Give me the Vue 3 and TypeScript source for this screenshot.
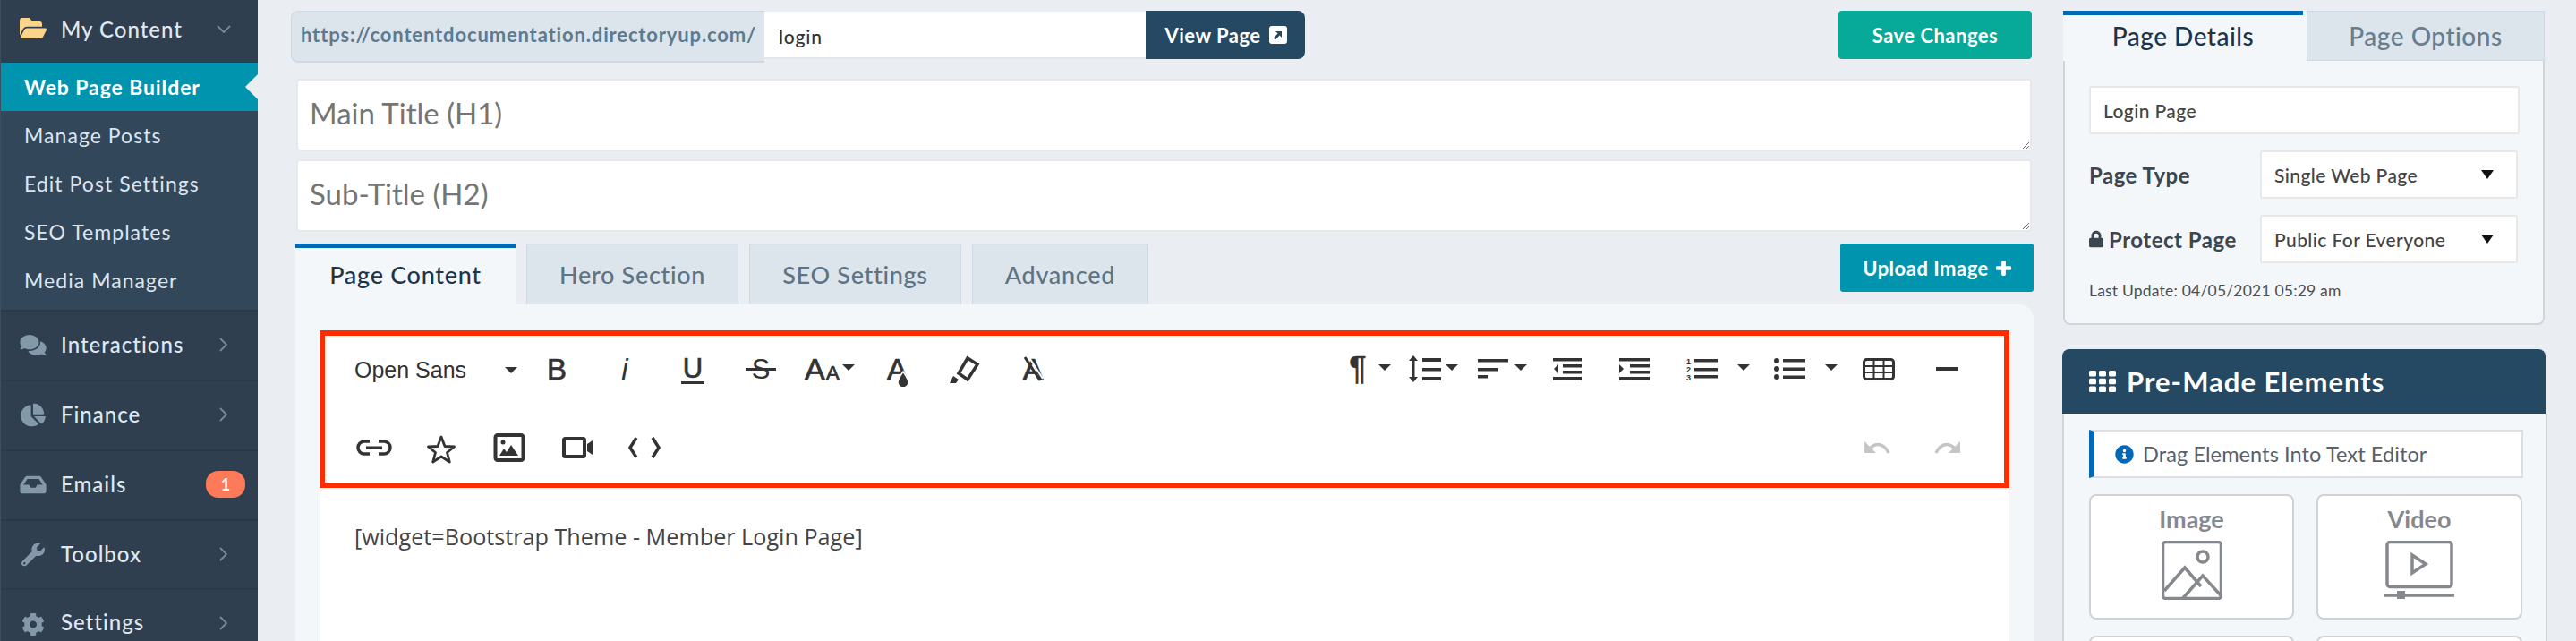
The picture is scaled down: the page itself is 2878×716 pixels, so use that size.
<script setup lang="ts">
interface NavItem {
  label: string
  viewBox: string
  path: string
  badge?: string
}

const subItems = ['Manage Posts', 'Edit Post Settings', 'SEO Templates', 'Media Manager']

const navItems: NavItem[] = [
  {
    label: 'Interactions',
    viewBox: '0 0 576 512',
    path: 'M416 192c0-88.4-93.1-160-208-160S0 103.6 0 192c0 34.3 14.1 65.9 38 92-13.4 30.2-35.5 54.2-35.8 54.5-2.2 2.3-2.8 5.7-1.5 8.7S4.8 352 8 352c36.6 0 66.9-12.3 88.7-25 32.2 15.7 70.3 25 111.3 25 114.9 0 208-71.6 208-160zm122 220c23.9-26 38-57.7 38-92 0-66.9-53.5-124.2-129.3-148.1.9 6.6 1.3 13.3 1.3 20.1 0 105.9-107.7 192-240 192-10.8 0-21.3-.8-31.7-1.9C207.8 439.6 281.8 480 368 480c41 0 79.1-9.2 111.3-25 21.8 12.7 52.1 25 88.7 25 3.2 0 6.1-1.9 7.3-4.8 1.3-2.9.7-6.3-1.5-8.7-.3-.3-22.4-24.2-35.8-54.5z'
  },
  {
    label: 'Finance',
    viewBox: '0 0 544 512',
    path: 'M527.79 288H290.5l158.03 158.03c6.04 6.04 15.98 6.53 22.19.68 38.7-36.46 65.32-85.61 73.13-140.86 1.34-9.46-6.51-17.85-16.06-17.85zm-15.83-64.8C503.72 103.74 408.26 8.28 288.8.04 279.68-.59 272 7.1 272 16.24V240h223.77c9.14 0 16.82-7.68 16.19-16.8zM224 288V50.71c0-9.55-8.39-17.4-17.84-16.06C86.99 51.49-4.1 155.6.14 280.37 4.5 408.51 114.83 513.59 243.03 511.98c50.4-.63 96.97-16.87 135.26-44.03 7.9-5.6 8.42-17.23 1.57-24.08L224 288z'
  },
  {
    label: 'Emails',
    viewBox: '0 0 576 512',
    badge: '1',
    path: 'M567.938 243.908L462.25 85.374A48.003 48.003 0 0 0 422.311 64H153.689a48 48 0 0 0-39.938 21.374L8.062 243.908A47.994 47.994 0 0 0 0 270.533V400c0 26.51 21.49 48 48 48h480c26.51 0 48-21.49 48-48V270.533a47.994 47.994 0 0 0-8.062-26.625zM162.252 128h251.497l85.333 128H376l-32 64H232l-32-64H76.918l85.334-128z'
  },
  {
    label: 'Toolbox',
    viewBox: '0 0 512 512',
    path: 'M507.73 109.1c-2.24-9.03-13.54-12.09-20.12-5.51l-74.36 74.36-67.88-11.31-11.31-67.88 74.36-74.36c6.62-6.62 3.43-17.9-5.66-20.16-47.38-11.74-99.55.91-136.58 37.93-39.64 39.64-50.55 97.1-34.05 147.2L18.74 402.76c-24.99 24.99-24.99 65.51 0 90.5 24.99 24.99 65.51 24.99 90.5 0l213.21-213.21c50.12 16.71 107.47 5.68 147.37-34.22 37.07-37.07 49.7-89.32 37.91-136.73zM64 472c-13.25 0-24-10.75-24-24 0-13.26 10.75-24 24-24s24 10.74 24 24c0 13.25-10.75 24-24 24z'
  },
  {
    label: 'Settings',
    viewBox: '0 0 512 512',
    path: 'M487.4 315.7l-42.6-24.6c4.3-23.2 4.3-47 0-70.2l42.6-24.6c4.9-2.8 7.1-8.6 5.5-14-11.1-35.6-30-67.8-54.7-94.6-3.8-4.1-10-5.1-14.8-2.3L380.8 110c-17.9-15.4-38.5-27.3-60.8-35.1V25.8c0-5.6-3.9-10.5-9.4-11.7-36.7-8.2-74.3-7.8-109.2 0-5.5 1.2-9.4 6.1-9.4 11.7V75c-22.2 7.9-42.8 19.8-60.8 35.1L88.7 85.5c-4.9-2.8-11-1.9-14.8 2.3-24.7 26.7-43.6 58.9-54.7 94.6-1.7 5.4.6 11.2 5.5 14L67.3 221c-4.3 23.2-4.3 47 0 70.2l-42.6 24.6c-4.9 2.8-7.1 8.6-5.5 14 11.1 35.6 30 67.8 54.7 94.6 3.8 4.1 10 5.1 14.8 2.3l42.6-24.6c17.9 15.4 38.5 27.3 60.8 35.1v49.2c0 5.6 3.9 10.5 9.4 11.7 36.7 8.2 74.3 7.8 109.2 0 5.5-1.2 9.4-6.1 9.4-11.7v-49.2c22.2-7.9 42.8-19.8 60.8-35.1l42.6 24.6c4.9 2.8 11 1.9 14.8-2.3 24.7-26.7 43.6-58.9 54.7-94.6 1.5-5.5-.7-11.3-5.6-14.1zM256 336c-44.1 0-80-35.9-80-80s35.9-80 80-80 80 35.9 80 80-35.9 80-80 80z'
  }
]

const tabs = ['Hero Section', 'SEO Settings', 'Advanced']
</script>

<template>
  <div class="page">
    <!-- left nav -->
    <aside class="sidebar">
      <div class="nav-head">
        <svg class="nav-icon folder" viewBox="0 64 576 384" preserveAspectRatio="none"><path d="M572.694 292.093L500.27 416.248A63.997 63.997 0 0 1 444.989 448H45.025c-18.523 0-30.064-20.093-20.731-36.093l72.424-124.155A64 64 0 0 1 152 256h399.964c18.523 0 30.064 20.093 20.73 36.093zM152 224h328v-48c0-26.51-21.49-48-48-48H272l-64-64H48C21.49 64 0 85.49 0 112v278.046l69.077-118.418C86.214 242.25 117.989 224 152 224z" /></svg>
        <span>My Content</span>
        <svg class="chev-down" viewBox="0 0 16 10"><path d="M1 1l7 7 7-7" /></svg>
      </div>
      <div class="sub-nav">
        <div class="sub-item active">Web Page Builder</div>
        <div v-for="item in subItems" :key="item" class="sub-item">{{ item }}</div>
      </div>
      <div v-for="item in navItems" :key="item.label" class="nav-row">
        <svg class="nav-icon" :viewBox="item.viewBox"><path :d="item.path" /></svg>
        <span>{{ item.label }}</span>
        <b v-if="item.badge" class="badge">{{ item.badge }}</b>
        <svg v-else class="chev-right" viewBox="0 0 10 16"><path d="M1 1l7 7-7 7" /></svg>
      </div>
    </aside>

    <main class="content">
      <section class="left-col">
        <div class="top-bar">
          <div class="url-group">
            <span class="url-addon">https://contentdocumentation.directoryup.com/</span>
            <input class="url-input" value="login" />
            <button class="view-btn">
              View Page
              <svg viewBox="0 0 20 20"><rect width="20" height="20" rx="3" fill="#fff" /><path d="M7 6h7v7l-2.4-2.4-4.6 5-2.2-2.2 4.8-4.8z" fill="#254863" /></svg>
            </button>
          </div>
          <button class="save-btn">Save Changes</button>
        </div>

        <textarea class="title-box" placeholder="Main Title (H1)"></textarea>
        <textarea class="title-box second" placeholder="Sub-Title (H2)"></textarea>

        <div class="tab-row">
          <div class="tab current">Page Content</div>
          <div v-for="tab in tabs" :key="tab" class="tab">{{ tab }}</div>
          <button class="upload-btn">
            Upload Image
            <svg viewBox="0 0 18 18"><path d="M6.5 1.5a1.5 1.5 0 0 1 1.5-1.5h2a1.5 1.5 0 0 1 1.5 1.5v5h5a1.5 1.5 0 0 1 1.5 1.5v2a1.5 1.5 0 0 1-1.5 1.5h-5v5a1.5 1.5 0 0 1-1.5 1.5h-2a1.5 1.5 0 0 1-1.5-1.5v-5h-5a1.5 1.5 0 0 1-1.5-1.5v-2a1.5 1.5 0 0 1 1.5-1.5h5z" fill="#fff" /></svg>
          </button>
        </div>

        <div class="tab-panel">
          <div class="editor">
            <div class="toolbar">
              <div class="tool-row">
                <div class="font-pick">
                  <span>Open Sans</span>
                  <svg width="14" height="7"><path d="M0 0h14l-7 7z" /></svg>
                </div>
                <svg class="btn glyph" viewBox="0 0 76 40"><text x="38" y="32" font-size="33" text-anchor="middle">B</text></svg>
                <svg class="btn" viewBox="0 0 76 40"><text x="38" y="32" font-size="33" font-style="italic" text-anchor="middle">i</text></svg>
                <svg class="btn glyph" viewBox="0 0 76 40"><text x="38" y="30" font-size="31" text-anchor="middle">U</text><rect x="25" y="34" width="26" height="3" /></svg>
                <svg class="btn" viewBox="0 0 76 40"><text x="38" y="31" font-size="31" text-anchor="middle">S</text><rect x="21" y="19" width="34" height="3" /></svg>
                <svg class="btn glyph" viewBox="0 0 76 40"><text x="11" y="32" font-size="34">A</text><text x="35" y="32" font-size="22">A</text><path d="M53 15h14l-7 7z" /></svg>
                <svg class="btn glyph" viewBox="0 0 76 40"><text x="27" y="32" font-size="34">A</text><path d="M45 23c4 6 6 9 6 12a6 6 0 0 1-12 0c0-3 2-6 6-12z" stroke="#fff" stroke-width="1.5" /></svg>
                <svg class="btn" viewBox="0 0 76 40"><path d="M41 8l11 7-11 17-10-7z" fill="none" stroke="#333" stroke-width="3.500" /><path d="M21 36l4-8 6 4-3 4z" /></svg>
                <svg class="btn glyph" viewBox="0 0 76 40"><text x="38" y="32" font-size="34" text-anchor="middle">A</text><path d="M29 7l17 26" stroke="#333" stroke-width="3" /><path d="M33 6l16 25" stroke="#fff" stroke-width="2" /></svg>

                <div class="spacer"></div>

                <svg class="btn glyph" width="65" viewBox="0 0 65 40"><text x="17" y="32" font-size="36" text-anchor="middle">¶</text><path d="M40 15h14l-7 7z" /></svg>
                <svg class="btn" width="75" viewBox="0 0 75 40"><path d="M14 5l5 6h-3.500v18h3.500l-5 6-5-6h3.500v-18h-3.500z" /><rect x="24" y="8" width="21" height="4" /><rect x="24" y="19" width="21" height="3.500" /><rect x="24" y="29" width="21" height="4" /><path d="M50 15h14l-7 7z" /></svg>
                <svg class="btn" width="73" viewBox="0 0 73 40"><rect x="11" y="9" width="34" height="3.500" /><rect x="11" y="19" width="23" height="3.500" /><rect x="11" y="27" width="12" height="3.500" /><path d="M52 15h14l-7 7z" /></svg>
                <svg class="btn" width="75" viewBox="0 0 75 40"><rect x="22" y="8" width="32" height="3.500" /><rect x="33" y="15" width="21" height="3.500" /><rect x="33" y="22" width="21" height="3.500" /><rect x="22" y="29" width="32" height="3.500" /><path d="M28 15v10l-5-5z" /></svg>
                <svg class="btn" viewBox="0 0 76 40"><rect x="21" y="8" width="34" height="3.500" /><rect x="33" y="15" width="22" height="3.500" /><rect x="33" y="22" width="22" height="3.500" /><rect x="21" y="29" width="34" height="3.500" /><path d="M21 15v10l5-5z" /></svg>
                <svg class="btn" width="97" viewBox="0 0 97 40"><text x="20" y="15" font-size="9" font-weight="700">1</text><text x="20" y="24" font-size="9" font-weight="700">2</text><text x="20" y="33" font-size="9" font-weight="700">3</text><rect x="29" y="9" width="26" height="3.500" /><rect x="29" y="19" width="26" height="3.500" /><rect x="29" y="27" width="26" height="3.500" /><path d="M77 15h14l-7 7z" /></svg>
                <svg class="btn" width="100" viewBox="0 0 100 40"><circle cx="24" cy="11" r="3" /><circle cx="24" cy="20" r="3" /><circle cx="24" cy="29" r="3" /><rect x="31" y="9" width="25" height="3.500" /><rect x="31" y="18.500" width="25" height="3.500" /><rect x="31" y="27.500" width="25" height="3.500" /><path d="M78 15h14l-7 7z" /></svg>
                <svg class="btn" viewBox="0 0 76 40"><rect x="21.500" y="9.500" width="33" height="22" rx="3" fill="none" stroke="#333" stroke-width="3" /><path d="M21 17h34M21 24h34M32.500 9v23M43.500 9v23" stroke="#333" stroke-width="2" /></svg>
                <svg class="btn" viewBox="0 0 76 40"><rect x="26" y="18" width="24" height="4" /></svg>
              </div>
              <div class="tool-row">
                <svg class="btn" viewBox="0 0 76 40"><path d="M34 13h-6a7 7 0 0 0 0 14h6M44 13h6a7 7 0 0 1 0 14h-6" fill="none" stroke="#333" stroke-width="3.500" /><rect x="30" y="18.500" width="18" height="3.500" /></svg>
                <svg class="btn" viewBox="0 0 76 40"><path d="M38 8l4 10.500 10.500.5-8 6.500 2.800 10.500-9.300-6-9.300 6 2.800-10.500-8-6.500 10.500-.5z" fill="none" stroke="#333" stroke-width="2.800" stroke-linejoin="round" /></svg>
                <svg class="btn" viewBox="0 0 76 40"><rect x="22.500" y="6" width="31" height="28" rx="2.500" fill="none" stroke="#333" stroke-width="4" /><circle cx="31" cy="14" r="2.500" /><path d="M27 29l5-8 3 4 5-8 8 12z" /></svg>
                <svg class="btn" viewBox="0 0 76 40"><rect x="23" y="10" width="23" height="20" rx="1.500" fill="none" stroke="#333" stroke-width="4" /><path d="M49 16l6-4v16l-6-4z" /></svg>
                <svg class="btn" viewBox="0 0 76 40"><path d="M28 9l-7 11 7 11M46 9l7 11-7 11" fill="none" stroke="#333" stroke-width="3.500" /></svg>

                <div class="spacer"></div>

                <svg class="btn off" viewBox="0 0 76 40"><path d="M22 13v13h13z" /><path d="M28 21c7-7 16-6 21 5" fill="none" stroke="#c5c5c5" stroke-width="3.500" /></svg>
                <svg class="btn off" viewBox="0 0 76 40"><path d="M53 13v13h-13z" /><path d="M47 21c-7-7-16-6-21 5" fill="none" stroke="#c5c5c5" stroke-width="3.500" /></svg>
              </div>
            </div>
            <div class="editor-body">[widget=Bootstrap Theme - Member Login Page]</div>
          </div>
        </div>
      </section>

      <section class="right-col">
        <div class="details">
          <div class="details-tabs">
            <div class="d-tab current">Page Details</div>
            <div class="d-tab">Page Options</div>
          </div>
          <div class="details-body">
            <input class="field" value="Login Page" />
            <div class="form-row">
              <label>Page Type</label>
              <div class="fake-select"><span>Single Web Page</span><i></i></div>
            </div>
            <div class="form-row">
              <label>
                <svg viewBox="0 0 448 512"><path d="M400 224h-24v-72C376 68.200 307.800 0 224 0S72 68.200 72 152v72H48c-26.500 0-48 21.500-48 48v192c0 26.500 21.500 48 48 48h352c26.500 0 48-21.500 48-48V272c0-26.500-21.500-48-48-48zm-104 0H152v-72c0-39.700 32.300-72 72-72s72 32.300 72 72v72z" /></svg>
                Protect Page
              </label>
              <div class="fake-select"><span>Public For Everyone</span><i></i></div>
            </div>
            <p class="updated">Last Update: 04/05/2021 05:29 am</p>
          </div>
        </div>

        <div class="elements">
          <h3>
            <svg viewBox="0 0 30 24"><g fill="#fff"><rect width="8" height="6.500" rx="1.500" /><rect x="11" width="8" height="6.500" rx="1.500" /><rect x="22" width="8" height="6.500" rx="1.500" /><rect y="8.700" width="8" height="6.500" rx="1.500" /><rect x="11" y="8.700" width="8" height="6.500" rx="1.500" /><rect x="22" y="8.700" width="8" height="6.500" rx="1.500" /><rect y="17.500" width="8" height="6.500" rx="1.500" /><rect x="11" y="17.500" width="8" height="6.500" rx="1.500" /><rect x="22" y="17.500" width="8" height="6.500" rx="1.500" /></g></svg>
            Pre-Made Elements
          </h3>
          <div class="elements-body">
            <div class="hint">
              <svg viewBox="0 0 512 512"><path d="M256 8C119.043 8 8 119.083 8 256c0 136.997 111.043 248 248 248s248-111.003 248-248C504 119.083 392.957 8 256 8zm0 110c23.196 0 42 18.804 42 42s-18.804 42-42 42-42-18.804-42-42 18.804-42 42-42zm56 254c0 6.627-5.373 12-12 12h-88c-6.627 0-12-5.373-12-12v-24c0-6.627 5.373-12 12-12h12v-64h-12c-6.627 0-12-5.373-12-12v-24c0-6.627 5.373-12 12-12h64c6.627 0 12 5.373 12 12v100h12c6.627 0 12 5.373 12 12v24z" /></svg>
              Drag Elements Into Text Editor
            </div>
            <div class="element-grid">
              <div class="element">
                <span>Image</span>
                <svg width="68" height="66" viewBox="0 0 68 66"><rect x="1.500" y="1.500" width="65" height="63" rx="3" /><circle cx="46" cy="18" r="6" /><path d="M3 56l23-26 18 21M24 64l22-25 21 23" /></svg>
              </div>
              <div class="element">
                <span>Video</span>
                <svg width="78" height="66" viewBox="0 0 78 66"><rect x="3" y="1.500" width="72" height="50" rx="3" /><path d="M31 16l15 10-15 10z" /><path d="M0 61h78" /><rect x="14" y="56" width="9" height="9" fill="#85888c" stroke="none" /></svg>
              </div>
              <div class="element"></div>
              <div class="element"></div>
            </div>
          </div>
        </div>
      </section>
    </main>
  </div>
</template>

<style scoped>
.page {
  display: flex;
  height: 716px;
  overflow: hidden;
  background: #eaeef3;
  font-family: Lato, "Noto Sans", sans-serif;
}

/* sidebar */
.sidebar {
  width: 288px;
  flex: none;
  box-sizing: border-box;
  background: #2f3f50;
  border-left: 1px solid #3e4f60;
  color: #dfe8f0;
  font-size: 24px;
  font-weight: 500;
}
.nav-head,
.nav-row {
  display: flex;
  align-items: center;
  position: relative;
  padding-left: 67px;
  letter-spacing: 1px;
}
.nav-head {
  height: 70px;
  padding-bottom: 6px;
  box-sizing: border-box;
}
.nav-row {
  height: 78px;
  box-sizing: border-box;
  border-bottom: 2px solid #27394a;
  padding-bottom: 3px;
}
.nav-row:last-child {
  border-bottom: 0;
  padding-bottom: 7px;
}
.nav-row:nth-last-child(2) {
  height: 77px;
}
.nav-icon {
  position: absolute;
  left: 21px;
  top: 50%;
  width: 30px;
  height: 26px;
  transform: translateY(-52%);
  fill: #8399a9;
}
.nav-icon.folder {
  fill: #fbd68a;
  height: 23px;
  transform: translateY(-65%);
}
.chev-down,
.chev-right {
  position: absolute;
  fill: none;
  stroke: #788a99;
  stroke-width: 1.8;
}
.chev-down {
  left: 241px;
  top: 28px;
  width: 16px;
  height: 10px;
}
.chev-right {
  left: 244px;
  top: 29px;
  width: 10px;
  height: 16px;
}
.badge {
  position: absolute;
  left: 229px;
  top: 22px;
  width: 44px;
  height: 30px;
  border-radius: 14px;
  background: #ff7a59;
  color: #fff;
  font-size: 18px;
  line-height: 30px;
  text-align: center;
  letter-spacing: 0;
}
.sub-nav {
  background: #33475b;
  padding-bottom: 6px;
  border-bottom: 2px solid #27394a;
}
.sub-item {
  height: 54px;
  line-height: 54px;
  padding-left: 26px;
  font-size: 23px;
  font-weight: 400;
  letter-spacing: 1.050px;
  color: #dbe5ee;
}
.sub-item.active {
  position: relative;
  background: #0094af;
  color: #fff;
  font-weight: 700;
  letter-spacing: 0.900px;
}
.sub-item.active::after {
  content: "";
  position: absolute;
  right: 0;
  top: 13px;
  border: 14px solid transparent;
  border-right-color: #eaeef3;
  border-left: 0;
}

/* main */
.content {
  flex: 1;
  min-width: 0;
  display: grid;
  grid-template-columns: 1942px 542px;
  column-gap: 32px;
  padding: 12px 0 0 42px;
  color: #333;
}
.left-col {
  display: flex;
  flex-direction: column;
  min-height: 0;
}
.top-bar {
  display: flex;
  justify-content: space-between;
  height: 54px;
  margin-left: -5px;
  padding-right: 2px;
}
.url-group {
  display: flex;
  align-items: flex-start;
  height: 58px;
}
.url-addon {
  width: 529px;
  height: 58px;
  box-sizing: border-box;
  background: #dce4ec;
  border: 1px solid #cfd9e3;
  border-right: 0;
  border-bottom-width: 2px;
  border-radius: 8px 0 0 8px;
  padding: 0 0 5px 10px;
  display: flex;
  align-items: center;
  color: #5c7a90;
  font-size: 22px;
  font-weight: 700;
  letter-spacing: 0.850px;
  white-space: nowrap;
}
.url-input {
  width: 426px;
  height: 53px;
  box-sizing: border-box;
  margin-top: 1px;
  border: 0;
  border-bottom: 2px solid #e4e7ea;
  padding: 4px 0 0 16px;
  outline: 0;
  color: #333;
  font: 500 21px Lato, sans-serif;
  letter-spacing: 0.800px;
}
.view-btn,
.save-btn,
.upload-btn {
  height: 54px;
  border: 0;
  color: #fff;
  font: 700 22px Lato, sans-serif;
  letter-spacing: 0.500px;
  display: flex;
  align-items: center;
  justify-content: center;
}
.view-btn {
  width: 178px;
  background: #254863;
  border-radius: 0 8px 8px 0;
  gap: 9px;
  padding: 0 0 0 1px;
}
.view-btn svg {
  width: 20px;
  height: 20px;
}
.save-btn {
  width: 216px;
  background: #07a999;
  border-radius: 4px;
}
.title-box {
  display: block;
  width: 1939px;
  height: 81px;
  box-sizing: border-box;
  flex: none;
  margin: 22px 0 0 1px;
  padding: 17px 13px 0;
  border: 2px solid #e6e8ea;
  border-radius: 4px;
  background: #fff;
  outline: 0;
  font: 400 33px/1.200 Lato, sans-serif;
  color: #333;
  resize: vertical;
}
.title-box.second {
  margin-top: 9px;
}
.title-box::placeholder {
  color: #757575;
}
.tab-row {
  display: flex;
  align-items: flex-start;
  gap: 12px;
  height: 68px;
  margin-top: 13px;
  flex: none;
}
.tab {
  height: 68px;
  box-sizing: border-box;
  display: flex;
  align-items: center;
  justify-content: center;
  padding: 0 36px;
  background: #dce4ec;
  border: 1px solid #cfd9e3;
  border-bottom: 0;
  color: #5d7485;
  font-size: 27px;
  font-weight: 500;
  letter-spacing: 0.700px;
  white-space: nowrap;
}
.tab.current {
  background: #f4f7fa;
  border: 0;
  border-top: 5px solid #0068b5;
  color: #1c3549;
  padding: 0 36px;
  width: 246px;
  padding-bottom: 5px;
}
.upload-btn {
  width: 216px;
  margin-left: auto;
  background: #0094af;
  border-radius: 3px;
  gap: 8px;
}
.upload-btn svg {
  width: 17px;
  height: 17px;
}
.tab-panel {
  flex: 1;
  min-height: 0;
  background: #f4f7fa;
  border-radius: 0 16px 0 0;
  padding: 29px 27px 0;
}
.editor {
  height: 100%;
  background: #fff;
  border-left: 1px solid #ccc;
  border-right: 1px solid #ccc;
  box-sizing: border-box;
  font-family: "Open Sans", sans-serif;
}
.toolbar {
  margin: 0 -1px;
  height: 176px;
  box-sizing: border-box;
  border: 6px solid #ff2c00;
  padding: 0 26px 0 16px;
  display: flex;
  flex-direction: column;
  gap: 12px;
}
.tool-row {
  display: flex;
  align-items: center;
  height: 76px;
}
.spacer {
  flex: 1;
}
.font-pick {
  width: 205px;
  flex: none;
  box-sizing: border-box;
  display: flex;
  align-items: center;
  justify-content: space-between;
  padding: 0 6px 0 17px;
  font: 25px "Liberation Sans", sans-serif;
  color: #333;
}
.font-pick svg {
  fill: #333;
}
.btn {
  flex: none;
  height: 40px;
  margin-top: -2px;
  fill: #333;
  font-family: "Liberation Sans", sans-serif;
}
.btn:not([width]) {
  width: 76px;
}
.btn.glyph text {
  stroke: #333;
  stroke-width: 0.7;
}
.btn.off {
  fill: #c5c5c5;
}
.editor-body {
  padding: 38px 0 0 38px;
  font-size: 25.200px;
  line-height: 32px;
  color: #444;
}

/* right column */
.right-col {
  display: flex;
  flex-direction: column;
  gap: 27px;
}
.details {
  height: 351px;
  box-sizing: border-box;
  flex: none;
  width: 538px;
  margin-left: 1px;
  background: #f4f7fa;
  border: 2px solid #d0d5da;
  border-top: 0;
  border-radius: 0 0 8px 8px;
}
.details-tabs {
  display: flex;
  height: 56px;
  margin: 0 -2px;
  gap: 4px;
}
.d-tab {
  flex: 1;
  display: flex;
  align-items: center;
  justify-content: center;
  box-sizing: border-box;
  background: #dce4ec;
  border: 1px solid #cfd9e3;
  color: #687d8d;
  font-size: 28px;
  font-weight: 500;
  letter-spacing: 0.500px;
}
.d-tab.current {
  flex: none;
  width: 268px;
  background: #f4f7fa;
  border: 0;
  border-top: 5px solid #0068b5;
  color: #1c3549;
  padding-bottom: 5px;
}
.details-body {
  padding: 28px 28px 0 27px;
}
.field,
.fake-select {
  height: 54px;
  box-sizing: border-box;
  background: #fff;
  border: 2px solid #e6e8ea;
  border-radius: 3px;
  color: #444;
  font: 500 21px Lato, sans-serif;
  letter-spacing: 0.400px;
}
.field {
  display: block;
  width: 481px;
  padding: 0 14px;
  outline: 0;
}
.form-row {
  display: flex;
  align-items: center;
  justify-content: space-between;
  margin-top: 18px;
}
.form-row label {
  display: flex;
  align-items: center;
  gap: 6px;
  color: #3c4650;
  font-size: 24px;
  font-weight: 700;
  letter-spacing: 0.500px;
}
.form-row label svg {
  width: 16px;
  height: 24px;
  fill: #3c4650;
}
.fake-select {
  width: 288px;
  display: flex;
  align-items: center;
  justify-content: space-between;
  padding: 0 25px 0 14px;
}
.fake-select i {
  border: 7px solid transparent;
  border-top: 10px solid #111;
  border-bottom: 0;
}
.updated {
  margin: 20px 0 0;
  font-size: 17.500px;
  letter-spacing: 0.200px;
  color: #4a4f55;
}
.elements {
  width: 540px;
}
.elements h3 {
  margin: 0;
  height: 72px;
  display: flex;
  align-items: center;
  gap: 12px;
  padding-left: 30px;
  background: #254863;
  border-radius: 8px 8px 0 0;
  color: #fff;
  font-size: 31px;
  font-weight: 700;
  letter-spacing: 1px;
}
.elements h3 svg {
  width: 30px;
  height: 24px;
}
.elements-body {
  height: 320px;
  margin-right: -2px;
  box-sizing: border-box;
  background: #f4f7fa;
  border: 2px solid #d0d5da;
  border-top: 0;
  padding: 18px 26px 0 28px;
}
.hint {
  height: 54px;
  width: 485px;
  box-sizing: border-box;
  display: flex;
  align-items: center;
  gap: 10px;
  padding-left: 23px;
  background: #fff;
  border: 2px solid #dcdfe3;
  border-left: 6px solid #0068b5;
  color: #56616c;
  font-size: 23.500px;
  letter-spacing: 0.100px;
}
.hint svg {
  width: 21px;
  height: 21px;
  fill: #0068b5;
}
.element-grid {
  display: grid;
  grid-template-columns: 229px 230px;
  column-gap: 25px;
  row-gap: 18px;
  margin-top: 18px;
}
.element {
  height: 140px;
  box-sizing: border-box;
  border: 2px solid #cfd2d5;
  border-radius: 8px;
  background: #fff;
  display: flex;
  flex-direction: column;
  align-items: center;
  padding-top: 9px;
  gap: 8px;
  color: #85888c;
  font-size: 27px;
  font-weight: 700;
}
.element svg {
  fill: none;
  stroke: #85888c;
  stroke-width: 3.500;
}
</style>

<style>
html,
body {
  margin: 0;
  background: #eaeef3;
  overflow: hidden;
}
</style>
